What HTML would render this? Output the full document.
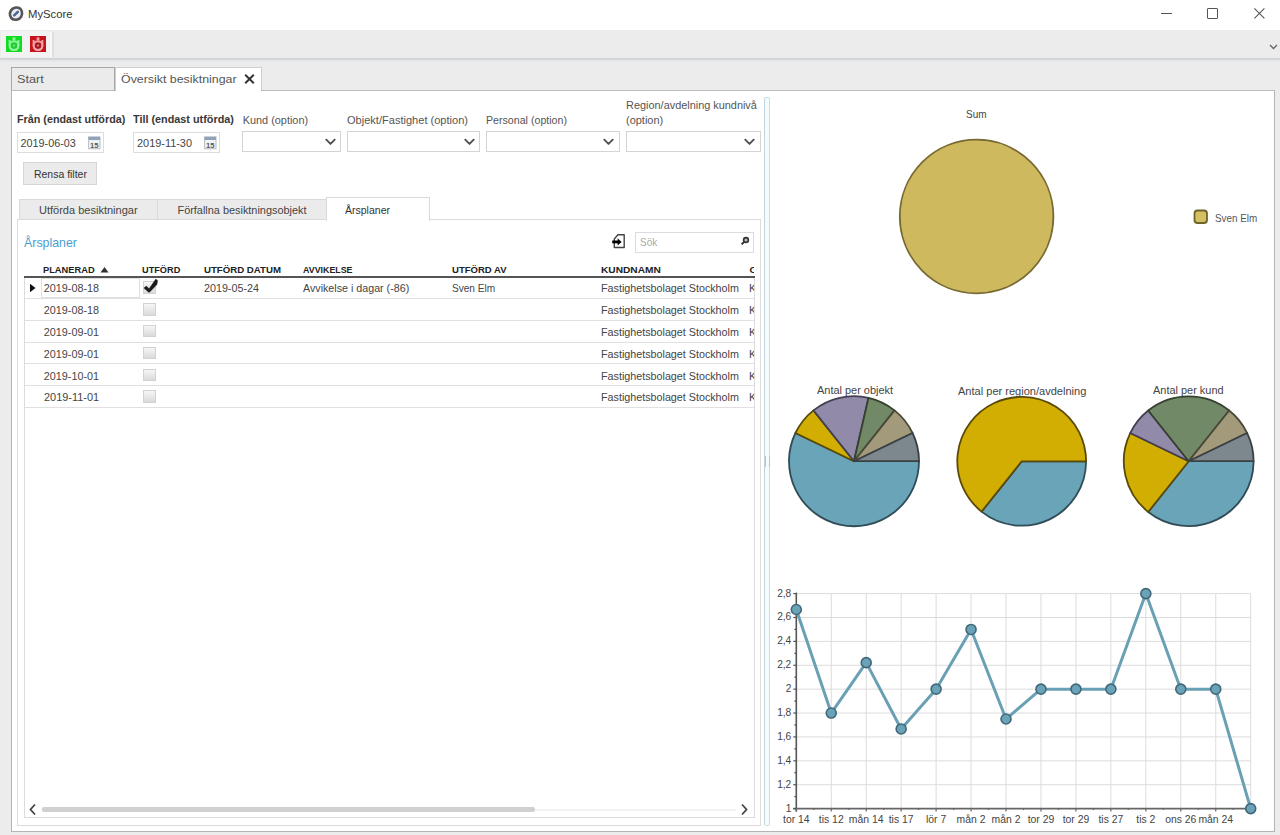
<!DOCTYPE html>
<html><head><meta charset="utf-8">
<style>
*{box-sizing:border-box;margin:0;padding:0}
html,body{width:1280px;height:835px;overflow:hidden;background:#ececec;font-family:"Liberation Sans",sans-serif;color:#444}
.a{position:absolute}
.t{position:absolute;white-space:nowrap;line-height:1}
</style></head><body>
<div class="a" style="left:0;top:0;width:1280px;height:29.5px;background:#fff"></div>
<svg class="a" style="left:0;top:0" width="32" height="30" viewBox="0 0 32 30">
  <circle cx="16" cy="13.7" r="5.6" fill="#e6eef9"/>
  <path d="M12.4 17.4L19.6 10" stroke="#f8fbff" stroke-width="2.4"/>
  <path d="M14.2 15.4L17.8 11.9" stroke="#4a6690" stroke-width="2.6" stroke-linecap="round"/>
  <path d="M18.85 7.67 A6.5 6.5 0 0 1 12.35 18.93" fill="none" stroke="#555" stroke-width="2.6"/>
  <path d="M13.15 19.63 A6.5 6.5 0 0 1 19.65 8.37" fill="none" stroke="#555" stroke-width="2.6"/>
</svg>
<div class="t" style="left:27.70px;top:8.48px;font-size:11.6px;font-weight:400;color:#333;transform:scaleX(0.9749);transform-origin:0 0;">MyScore</div>
<div class="a" style="left:1161px;top:13px;width:11px;height:1px;background:#555"></div>
<div class="a" style="left:1207px;top:8px;width:10.5px;height:10.5px;border:1px solid #555;border-radius:1px"></div>
<svg class="a" style="left:1253px;top:7px" width="13" height="13" viewBox="0 0 13 13"><path d="M1.4 1.4L11.4 11.4M11.4 1.4L1.4 11.4" stroke="#555" stroke-width="1.1"/></svg>
<div class="a" style="left:0;top:29.5px;width:1280px;height:28.5px;background:#ececec"></div>
<div class="a" style="left:1px;top:31px;width:49px;height:26px;background:#f2f2f2"></div>
<div class="a" style="left:0;top:58px;width:1280px;height:2px;background:#d2d4d6"></div>
<div class="a" style="left:0;top:60px;width:1280px;height:2px;background:#e6e9ec"></div>
<div class="a" style="left:50px;top:32px;width:1.5px;height:25px;background:#f8f8f8"></div>
<div class="a" style="left:51.5px;top:32px;width:2px;height:25px;background:#dedede"></div>
<div class="a" style="left:6px;top:36px;width:16px;height:16px;background:#12dc22"></div>
<svg class="a" style="left:6px;top:36px" width="16" height="16" viewBox="0 0 16 16"><circle cx="8" cy="9.6" r="3.4" fill="#26c83a"/><circle cx="8" cy="9.6" r="1.1" fill="#6ef07a"/><path d="M3.6 4 V9.6 A4.4 4.4 0 0 0 12.4 9.6 V4" fill="none" stroke="#8ef59a" stroke-width="1.9"/><circle cx="8" cy="9.6" r="4.4" fill="none" stroke="#8ef59a" stroke-width="1.9"/><rect x="6.6" y="1.4" width="2.8" height="3" fill="#8ef59a"/></svg>
<div class="a" style="left:30px;top:36px;width:16px;height:16px;background:#c8121c"></div>
<svg class="a" style="left:30px;top:36px" width="16" height="16" viewBox="0 0 16 16"><circle cx="8" cy="9.6" r="3.4" fill="#a81820"/><circle cx="8" cy="9.6" r="1.1" fill="#f07a80"/><path d="M3.6 4 V9.6 A4.4 4.4 0 0 0 12.4 9.6 V4" fill="none" stroke="#f2a4a4" stroke-width="1.9"/><circle cx="8" cy="9.6" r="4.4" fill="none" stroke="#f2a4a4" stroke-width="1.9"/><rect x="6.6" y="1.4" width="2.8" height="3" fill="#f2a4a4"/></svg>
<svg class="a" style="left:1269px;top:44px" width="9" height="6" viewBox="0 0 9 6"><path d="M1 1L4.5 4.5L8 1" fill="none" stroke="#666" stroke-width="1.4"/></svg>
<div class="a" style="left:11px;top:67px;width:105px;height:24px;background:#ebebeb;border:1px solid #a8a8a8;border-right:2px solid #a8a8a8"></div>
<div class="t" style="left:17.00px;top:73.08px;font-size:11.6px;font-weight:400;color:#555;transform:scaleX(1.0946);transform-origin:0 0;">Start</div>
<div class="a" style="left:115px;top:67px;width:147px;height:25px;background:#fff;border:1px solid #cfcfcf;border-bottom:none"></div>
<div class="t" style="left:121.40px;top:73.61px;font-size:11.8px;font-weight:400;color:#555;transform:scaleX(1.0494);transform-origin:0 0;">Översikt besiktningar</div>
<svg class="a" style="left:244px;top:74px" width="11" height="10" viewBox="0 0 11 10"><path d="M1.2 0.8L9.8 9.2M9.8 0.8L1.2 9.2" stroke="#333" stroke-width="2"/></svg>
<div class="a" style="left:11px;top:90px;width:1264px;height:742px;background:#fff;border:1px solid #b4b4b4;border-top-color:#bdbdc0"></div>
<div class="a" style="left:116px;top:89px;width:145px;height:3px;background:#fff"></div>
<div class="t" style="left:17.10px;top:114.37px;font-size:10.9px;font-weight:700;color:#383838;transform:scaleX(0.9889);transform-origin:0 0;">Från (endast utförda)</div>
<div class="t" style="left:133.30px;top:114.37px;font-size:10.9px;font-weight:700;color:#383838;transform:scaleX(0.9945);transform-origin:0 0;">Till (endast utförda)</div>
<div class="t" style="left:242.70px;top:114.67px;font-size:10.9px;font-weight:400;color:#555;">Kund (option)</div>
<div class="t" style="left:347.00px;top:114.67px;font-size:10.9px;font-weight:400;color:#555;transform:scaleX(1.0147);transform-origin:0 0;">Objekt/Fastighet (option)</div>
<div class="t" style="left:486.00px;top:114.67px;font-size:10.9px;font-weight:400;color:#555;transform:scaleX(0.9766);transform-origin:0 0;">Personal (option)</div>
<div class="t" style="left:626.10px;top:99.77px;font-size:10.9px;font-weight:400;color:#555;">Region/avdelning kundnivå</div>
<div class="t" style="left:626.10px;top:114.67px;font-size:10.9px;font-weight:400;color:#555;transform:scaleX(1.0071);transform-origin:0 0;">(option)</div>
<div class="a" style="left:17px;top:132px;width:87px;height:21px;border:1px solid #dcdcdc;background:#fff"></div>
<div class="t" style="left:20.60px;top:138.36px;font-size:10.8px;font-weight:400;color:#444;">2019-06-03</div>
<svg class="a" style="left:87.6px;top:136px" width="13" height="14" viewBox="0 0 13 14"><rect x="0.6" y="0.9" width="11.4" height="11.9" fill="#f0f3f6" stroke="#b4bcc4" stroke-width="1"/><rect x="0.6" y="0.9" width="11.4" height="3.1" fill="#8fa3b9"/><text x="6.3" y="11.6" font-size="7.6" font-weight="bold" text-anchor="middle" fill="#5a5a5a" font-family="Liberation Sans">15</text></svg>
<div class="a" style="left:133px;top:132px;width:87px;height:21px;border:1px solid #dcdcdc;background:#fff"></div>
<div class="t" style="left:137.00px;top:138.36px;font-size:10.8px;font-weight:400;color:#444;transform:scaleX(1.0103);transform-origin:0 0;">2019-11-30</div>
<svg class="a" style="left:203.6px;top:136px" width="13" height="14" viewBox="0 0 13 14"><rect x="0.6" y="0.9" width="11.4" height="11.9" fill="#f0f3f6" stroke="#b4bcc4" stroke-width="1"/><rect x="0.6" y="0.9" width="11.4" height="3.1" fill="#8fa3b9"/><text x="6.3" y="11.6" font-size="7.6" font-weight="bold" text-anchor="middle" fill="#5a5a5a" font-family="Liberation Sans">15</text></svg>
<div class="a" style="left:242px;top:131px;width:99px;height:21px;border:1px solid #d4d4d4;background:#fff"></div>
<svg class="a" style="left:325px;top:138px" width="11" height="8" viewBox="0 0 11 8"><path d="M1.3 1.7L5.5 5.9L9.7 1.7" fill="none" stroke="#505050" stroke-width="1.9" stroke-linecap="round" stroke-linejoin="round"/></svg>
<div class="a" style="left:347px;top:131px;width:133px;height:21px;border:1px solid #d4d4d4;background:#fff"></div>
<svg class="a" style="left:464px;top:138px" width="11" height="8" viewBox="0 0 11 8"><path d="M1.3 1.7L5.5 5.9L9.7 1.7" fill="none" stroke="#505050" stroke-width="1.9" stroke-linecap="round" stroke-linejoin="round"/></svg>
<div class="a" style="left:486px;top:131px;width:134px;height:21px;border:1px solid #d4d4d4;background:#fff"></div>
<svg class="a" style="left:603px;top:138px" width="11" height="8" viewBox="0 0 11 8"><path d="M1.3 1.7L5.5 5.9L9.7 1.7" fill="none" stroke="#505050" stroke-width="1.9" stroke-linecap="round" stroke-linejoin="round"/></svg>
<div class="a" style="left:626px;top:131px;width:135px;height:21px;border:1px solid #d4d4d4;background:#fff"></div>
<svg class="a" style="left:744px;top:138px" width="11" height="8" viewBox="0 0 11 8"><path d="M1.3 1.7L5.5 5.9L9.7 1.7" fill="none" stroke="#505050" stroke-width="1.9" stroke-linecap="round" stroke-linejoin="round"/></svg>
<div class="a" style="left:23px;top:162px;width:74px;height:23px;border:1px solid #d6d6d6;background:#ebebeb"></div>
<div class="t" style="left:34.00px;top:169.06px;font-size:10.8px;font-weight:400;color:#333;transform:scaleX(0.9687);transform-origin:0 0;">Rensa filter</div>
<div class="a" style="left:17px;top:218.5px;width:744px;height:607.5px;border:1px solid #dcdcdc;background:#fff"></div>
<div class="a" style="left:19px;top:199px;width:139px;height:20.5px;border:1px solid #dadada;background:#ebebeb"></div>
<div class="t" style="left:39.20px;top:204.57px;font-size:10.9px;font-weight:400;color:#444;transform:scaleX(1.0116);transform-origin:0 0;">Utförda besiktningar</div>
<div class="a" style="left:157px;top:199px;width:170px;height:20.5px;border:1px solid #dadada;background:#ebebeb"></div>
<div class="t" style="left:177.50px;top:204.57px;font-size:10.9px;font-weight:400;color:#444;">Förfallna besiktningsobjekt</div>
<div class="a" style="left:326px;top:197px;width:104px;height:24px;border:1px solid #dadada;border-bottom:none;background:#fff"></div>
<div class="t" style="left:345.00px;top:204.57px;font-size:10.9px;font-weight:400;color:#333;transform:scaleX(0.9651);transform-origin:0 0;">Årsplaner</div>
<div class="t" style="left:24.30px;top:236.57px;font-size:12.2px;font-weight:400;color:#4b9dd0;transform:scaleX(1.0159);transform-origin:0 0;">Årsplaner</div>
<svg class="a" style="left:611px;top:234px" width="15" height="15" viewBox="0 0 15 15"><path d="M6.9 0.8H13.2V13.5H3.3V5.0Z" fill="none" stroke="#444" stroke-width="1.4" stroke-linejoin="round"/><path d="M1.2 7.9H7.6" stroke="#000" stroke-width="2.8"/><path d="M6.6 4.2L10.6 7.9L6.6 11.6Z" fill="#000"/></svg>
<div class="a" style="left:635px;top:232px;width:119px;height:21px;border:1px solid #dcdcdc;background:#fff"></div>
<div class="t" style="left:639.80px;top:237.37px;font-size:10.9px;font-weight:400;color:#aaa;transform:scaleX(0.9158);transform-origin:0 0;">Sök</div>
<svg class="a" style="left:740px;top:236px" width="10" height="10" viewBox="0 0 10 10"><circle cx="6" cy="4" r="2.4" fill="#bbb" stroke="#333" stroke-width="1.6"/><path d="M4.4 5.6L1.6 8.4" stroke="#333" stroke-width="2"/></svg>
<div class="a" style="left:24px;top:276px;width:731px;height:542px;border:1px solid #dcdcdc;border-top:none;background:#fff"></div>
<div class="a" style="left:24px;top:276px;width:731px;height:2px;background:#555"></div>
<div class="t" style="left:43.10px;top:264.92px;font-size:9.9px;font-weight:700;color:#222;transform:scaleX(0.9403);transform-origin:0 0;">PLANERAD</div>
<svg class="a" style="left:100px;top:266px" width="9" height="7" viewBox="0 0 9 7"><path d="M0.5 6.5L4.5 1L8.5 6.5Z" fill="#333"/></svg>
<div class="t" style="left:142.20px;top:264.92px;font-size:9.9px;font-weight:700;color:#222;transform:scaleX(0.9310);transform-origin:0 0;">UTFÖRD</div>
<div class="t" style="left:203.75px;top:264.92px;font-size:9.9px;font-weight:700;color:#222;transform:scaleX(0.9770);transform-origin:0 0;">UTFÖRD DATUM</div>
<div class="t" style="left:303.00px;top:264.92px;font-size:9.9px;font-weight:700;color:#222;transform:scaleX(0.8959);transform-origin:0 0;">AVVIKELSE</div>
<div class="t" style="left:451.75px;top:264.92px;font-size:9.9px;font-weight:700;color:#222;transform:scaleX(0.9646);transform-origin:0 0;">UTFÖRD AV</div>
<div class="t" style="left:601.00px;top:264.92px;font-size:9.9px;font-weight:700;color:#222;transform:scaleX(1.0283);transform-origin:0 0;">KUNDNAMN</div>
<div class="a" style="left:747px;top:260px;width:7px;height:18px;overflow:hidden"><div class="t" style="left:2.50px;top:4.92px;font-size:9.9px;font-weight:700;color:#222">O</div></div>
<div class="a" style="left:25px;top:298.0px;width:729px;height:1px;background:#e0e0e0"></div>
<div class="a" style="left:41px;top:277.5px;width:98.5px;height:20px;border:1px solid #e0e0e0"></div>
<div class="t" style="left:43.80px;top:283.46px;font-size:10.8px;font-weight:400;color:#444;">2019-08-18</div>
<div class="a" style="left:143px;top:281.1px;width:12.5px;height:12.5px;border:1px solid #d2d2d2;background:linear-gradient(#f6f6f6,#dadada)"></div>
<div class="t" style="left:601.00px;top:283.46px;font-size:10.8px;font-weight:400;color:#444;transform:scaleX(0.9947);transform-origin:0 0;">Fastighetsbolaget Stockholm</div>
<div class="a" style="left:747px;top:279.5px;width:7px;height:18.0px;overflow:hidden"><div class="t" style="left:2.00px;top:3.96px;font-size:10.8px;font-weight:400;color:#444">K</div></div>
<svg class="a" style="left:29px;top:283px" width="8" height="10" viewBox="0 0 8 10"><path d="M1 0.8L6.5 5L1 9.2Z" fill="#111"/></svg>
<svg class="a" style="left:138px;top:275px" width="24" height="24" viewBox="0 0 24 24"><polygon points="5.89,13.08 8.34,11.07 11.07,13.80 17.82,4.02 19.55,5.46 18.97,9.49 11.50,17.25 10.35,16.96" fill="#1a1a1a" stroke="#1a1a1a" stroke-width="0.4" stroke-linejoin="round"/></svg>
<div class="t" style="left:204.20px;top:283.46px;font-size:10.8px;font-weight:400;color:#444;transform:scaleX(0.9939);transform-origin:0 0;">2019-05-24</div>
<div class="t" style="left:303.10px;top:283.46px;font-size:10.8px;font-weight:400;color:#444;transform:scaleX(0.9905);transform-origin:0 0;">Avvikelse i dagar (-86)</div>
<div class="t" style="left:451.90px;top:283.46px;font-size:10.8px;font-weight:400;color:#444;transform:scaleX(0.9328);transform-origin:0 0;">Sven Elm</div>
<div class="a" style="left:25px;top:319.8px;width:729px;height:1px;background:#e0e0e0"></div>
<div class="t" style="left:43.80px;top:305.26px;font-size:10.8px;font-weight:400;color:#444;">2019-08-18</div>
<div class="a" style="left:143px;top:303.1px;width:12.5px;height:12.5px;border:1px solid #d2d2d2;background:linear-gradient(#f6f6f6,#dadada)"></div>
<div class="t" style="left:601.00px;top:305.26px;font-size:10.8px;font-weight:400;color:#444;transform:scaleX(0.9947);transform-origin:0 0;">Fastighetsbolaget Stockholm</div>
<div class="a" style="left:747px;top:300.5px;width:7px;height:18.80000000000001px;overflow:hidden"><div class="t" style="left:2.00px;top:4.76px;font-size:10.8px;font-weight:400;color:#444">K</div></div>
<div class="a" style="left:25px;top:341.6px;width:729px;height:1px;background:#e0e0e0"></div>
<div class="t" style="left:43.80px;top:327.06px;font-size:10.8px;font-weight:400;color:#444;">2019-09-01</div>
<div class="a" style="left:143px;top:324.9px;width:12.5px;height:12.5px;border:1px solid #d2d2d2;background:linear-gradient(#f6f6f6,#dadada)"></div>
<div class="t" style="left:601.00px;top:327.06px;font-size:10.8px;font-weight:400;color:#444;transform:scaleX(0.9947);transform-origin:0 0;">Fastighetsbolaget Stockholm</div>
<div class="a" style="left:747px;top:322.3px;width:7px;height:18.80000000000001px;overflow:hidden"><div class="t" style="left:2.00px;top:4.76px;font-size:10.8px;font-weight:400;color:#444">K</div></div>
<div class="a" style="left:25px;top:363.4px;width:729px;height:1px;background:#e0e0e0"></div>
<div class="t" style="left:43.80px;top:348.86px;font-size:10.8px;font-weight:400;color:#444;">2019-09-01</div>
<div class="a" style="left:143px;top:346.7px;width:12.5px;height:12.5px;border:1px solid #d2d2d2;background:linear-gradient(#f6f6f6,#dadada)"></div>
<div class="t" style="left:601.00px;top:348.86px;font-size:10.8px;font-weight:400;color:#444;transform:scaleX(0.9947);transform-origin:0 0;">Fastighetsbolaget Stockholm</div>
<div class="a" style="left:747px;top:344.1px;width:7px;height:18.799999999999955px;overflow:hidden"><div class="t" style="left:2.00px;top:4.76px;font-size:10.8px;font-weight:400;color:#444">K</div></div>
<div class="a" style="left:25px;top:385.2px;width:729px;height:1px;background:#e0e0e0"></div>
<div class="t" style="left:43.80px;top:370.66px;font-size:10.8px;font-weight:400;color:#444;">2019-10-01</div>
<div class="a" style="left:143px;top:368.5px;width:12.5px;height:12.5px;border:1px solid #d2d2d2;background:linear-gradient(#f6f6f6,#dadada)"></div>
<div class="t" style="left:601.00px;top:370.66px;font-size:10.8px;font-weight:400;color:#444;transform:scaleX(0.9947);transform-origin:0 0;">Fastighetsbolaget Stockholm</div>
<div class="a" style="left:747px;top:365.9px;width:7px;height:18.80000000000001px;overflow:hidden"><div class="t" style="left:2.00px;top:4.76px;font-size:10.8px;font-weight:400;color:#444">K</div></div>
<div class="a" style="left:25px;top:407.0px;width:729px;height:1px;background:#e0e0e0"></div>
<div class="t" style="left:43.80px;top:392.46px;font-size:10.8px;font-weight:400;color:#444;transform:scaleX(1.0140);transform-origin:0 0;">2019-11-01</div>
<div class="a" style="left:143px;top:390.3px;width:12.5px;height:12.5px;border:1px solid #d2d2d2;background:linear-gradient(#f6f6f6,#dadada)"></div>
<div class="t" style="left:601.00px;top:392.46px;font-size:10.8px;font-weight:400;color:#444;transform:scaleX(0.9947);transform-origin:0 0;">Fastighetsbolaget Stockholm</div>
<div class="a" style="left:747px;top:387.7px;width:7px;height:18.80000000000001px;overflow:hidden"><div class="t" style="left:2.00px;top:4.76px;font-size:10.8px;font-weight:400;color:#444">K</div></div>
<svg class="a" style="left:28px;top:803px" width="10" height="13" viewBox="0 0 10 13"><path d="M7 1.5L2.5 6.5L7 11.5" fill="none" stroke="#444" stroke-width="1.8"/></svg>
<div class="a" style="left:42px;top:808.5px;width:694px;height:2px;background:#f3f3f3"></div>
<div class="a" style="left:42px;top:807px;width:493px;height:5px;background:#d0d0d0;border-radius:2px"></div>
<svg class="a" style="left:739px;top:803px" width="10" height="13" viewBox="0 0 10 13"><path d="M3 1.5L7.5 6.5L3 11.5" fill="none" stroke="#444" stroke-width="1.8"/></svg>
<div class="a" style="left:764.3px;top:96.5px;width:6.2px;height:729.5px;border:1px solid #c6dfe8;border-left-color:#c4d4dc;border-radius:2px;background:#f4fbfd"></div>
<div class="a" style="left:765.3px;top:456px;width:1px;height:10.5px;background:#b4c6ce"></div>
<div class="a" style="left:768.8px;top:456px;width:1px;height:10.5px;background:#b4c6ce"></div>
<svg class="a" style="left:0;top:0" width="1280" height="835" viewBox="0 0 1280 835">
<circle cx="976.6" cy="216.5" r="76.8" fill="#cfb95f" stroke="#786a32" stroke-width="1.8"/>
<rect x="1194.5" y="210.5" width="12.5" height="12.5" rx="3" fill="#d3c062" stroke="#6e6428" stroke-width="1.8"/>
<path d="M854.0,461.2 L795.44,433.00 A65.0,65.0 0 1 0 919.00,461.20 Z" fill="#69a4b9" stroke="#304c56" stroke-width="1.8" stroke-linejoin="round"/>
<path d="M854.0,461.2 L813.47,410.38 A65.0,65.0 0 0 0 795.44,433.00 Z" fill="#d2ad02" stroke="#5a4a08" stroke-width="1.8" stroke-linejoin="round"/>
<path d="M854.0,461.2 L868.46,397.83 A65.0,65.0 0 0 0 813.47,410.38 Z" fill="#918aa8" stroke="#444050" stroke-width="1.8" stroke-linejoin="round"/>
<path d="M854.0,461.2 L894.53,410.38 A65.0,65.0 0 0 0 868.46,397.83 Z" fill="#718966" stroke="#354030" stroke-width="1.8" stroke-linejoin="round"/>
<path d="M854.0,461.2 L912.56,433.00 A65.0,65.0 0 0 0 894.53,410.38 Z" fill="#a29a7b" stroke="#4c4838" stroke-width="1.8" stroke-linejoin="round"/>
<path d="M854.0,461.2 L919.00,461.20 A65.0,65.0 0 0 0 912.56,433.00 Z" fill="#7c888e" stroke="#3a4044" stroke-width="1.8" stroke-linejoin="round"/>
<path d="M1021.7,461.3 L981.55,511.65 A64.4,64.4 0 0 0 1086.10,461.30 Z" fill="#69a4b9" stroke="#304c56" stroke-width="1.8" stroke-linejoin="round"/>
<path d="M1021.7,461.3 L1086.10,461.30 A64.4,64.4 0 1 0 981.55,511.65 Z" fill="#d2ad02" stroke="#5a4a08" stroke-width="1.8" stroke-linejoin="round"/>
<path d="M1188.7,461.2 L1148.24,511.94 A64.9,64.9 0 0 0 1253.60,461.20 Z" fill="#69a4b9" stroke="#304c56" stroke-width="1.8" stroke-linejoin="round"/>
<path d="M1188.7,461.2 L1130.23,433.04 A64.9,64.9 0 0 0 1148.24,511.94 Z" fill="#d2ad02" stroke="#5a4a08" stroke-width="1.8" stroke-linejoin="round"/>
<path d="M1188.7,461.2 L1148.24,410.46 A64.9,64.9 0 0 0 1130.23,433.04 Z" fill="#918aa8" stroke="#444050" stroke-width="1.8" stroke-linejoin="round"/>
<path d="M1188.7,461.2 L1229.16,410.46 A64.9,64.9 0 0 0 1148.24,410.46 Z" fill="#718966" stroke="#354030" stroke-width="1.8" stroke-linejoin="round"/>
<path d="M1188.7,461.2 L1247.17,433.04 A64.9,64.9 0 0 0 1229.16,410.46 Z" fill="#a29a7b" stroke="#4c4838" stroke-width="1.8" stroke-linejoin="round"/>
<path d="M1188.7,461.2 L1253.60,461.20 A64.9,64.9 0 0 0 1247.17,433.04 Z" fill="#7c888e" stroke="#3a4044" stroke-width="1.8" stroke-linejoin="round"/>
<line x1="796.3" y1="784.71" x2="1250.7" y2="784.71" stroke="#dcdcdc" stroke-width="1"/>
<line x1="796.3" y1="760.82" x2="1250.7" y2="760.82" stroke="#dcdcdc" stroke-width="1"/>
<line x1="796.3" y1="736.93" x2="1250.7" y2="736.93" stroke="#dcdcdc" stroke-width="1"/>
<line x1="796.3" y1="713.04" x2="1250.7" y2="713.04" stroke="#dcdcdc" stroke-width="1"/>
<line x1="796.3" y1="689.16" x2="1250.7" y2="689.16" stroke="#dcdcdc" stroke-width="1"/>
<line x1="796.3" y1="665.27" x2="1250.7" y2="665.27" stroke="#dcdcdc" stroke-width="1"/>
<line x1="796.3" y1="641.38" x2="1250.7" y2="641.38" stroke="#dcdcdc" stroke-width="1"/>
<line x1="796.3" y1="617.49" x2="1250.7" y2="617.49" stroke="#dcdcdc" stroke-width="1"/>
<line x1="796.3" y1="593.60" x2="1250.7" y2="593.60" stroke="#dcdcdc" stroke-width="1"/>
<line x1="831.25" y1="593.6" x2="831.25" y2="808.6" stroke="#dcdcdc" stroke-width="1"/>
<line x1="866.21" y1="593.6" x2="866.21" y2="808.6" stroke="#dcdcdc" stroke-width="1"/>
<line x1="901.16" y1="593.6" x2="901.16" y2="808.6" stroke="#dcdcdc" stroke-width="1"/>
<line x1="936.12" y1="593.6" x2="936.12" y2="808.6" stroke="#dcdcdc" stroke-width="1"/>
<line x1="971.07" y1="593.6" x2="971.07" y2="808.6" stroke="#dcdcdc" stroke-width="1"/>
<line x1="1006.02" y1="593.6" x2="1006.02" y2="808.6" stroke="#dcdcdc" stroke-width="1"/>
<line x1="1040.98" y1="593.6" x2="1040.98" y2="808.6" stroke="#dcdcdc" stroke-width="1"/>
<line x1="1075.93" y1="593.6" x2="1075.93" y2="808.6" stroke="#dcdcdc" stroke-width="1"/>
<line x1="1110.88" y1="593.6" x2="1110.88" y2="808.6" stroke="#dcdcdc" stroke-width="1"/>
<line x1="1145.84" y1="593.6" x2="1145.84" y2="808.6" stroke="#dcdcdc" stroke-width="1"/>
<line x1="1180.79" y1="593.6" x2="1180.79" y2="808.6" stroke="#dcdcdc" stroke-width="1"/>
<line x1="1215.75" y1="593.6" x2="1215.75" y2="808.6" stroke="#dcdcdc" stroke-width="1"/>
<line x1="1250.70" y1="593.6" x2="1250.70" y2="808.6" stroke="#dcdcdc" stroke-width="1"/>
<line x1="796.3" y1="592.6" x2="796.3" y2="811.6" stroke="#555" stroke-width="1.6"/>
<line x1="793.3" y1="808.6" x2="1250.7" y2="808.6" stroke="#666" stroke-width="1.6"/>
<line x1="793.3" y1="808.60" x2="796.3" y2="808.60" stroke="#555" stroke-width="1.2"/>
<line x1="794.3" y1="796.66" x2="796.3" y2="796.66" stroke="#555" stroke-width="1.2"/>
<line x1="793.3" y1="784.71" x2="796.3" y2="784.71" stroke="#555" stroke-width="1.2"/>
<line x1="794.3" y1="772.77" x2="796.3" y2="772.77" stroke="#555" stroke-width="1.2"/>
<line x1="793.3" y1="760.82" x2="796.3" y2="760.82" stroke="#555" stroke-width="1.2"/>
<line x1="794.3" y1="748.88" x2="796.3" y2="748.88" stroke="#555" stroke-width="1.2"/>
<line x1="793.3" y1="736.93" x2="796.3" y2="736.93" stroke="#555" stroke-width="1.2"/>
<line x1="794.3" y1="724.99" x2="796.3" y2="724.99" stroke="#555" stroke-width="1.2"/>
<line x1="793.3" y1="713.04" x2="796.3" y2="713.04" stroke="#555" stroke-width="1.2"/>
<line x1="794.3" y1="701.10" x2="796.3" y2="701.10" stroke="#555" stroke-width="1.2"/>
<line x1="793.3" y1="689.16" x2="796.3" y2="689.16" stroke="#555" stroke-width="1.2"/>
<line x1="794.3" y1="677.21" x2="796.3" y2="677.21" stroke="#555" stroke-width="1.2"/>
<line x1="793.3" y1="665.27" x2="796.3" y2="665.27" stroke="#555" stroke-width="1.2"/>
<line x1="794.3" y1="653.32" x2="796.3" y2="653.32" stroke="#555" stroke-width="1.2"/>
<line x1="793.3" y1="641.38" x2="796.3" y2="641.38" stroke="#555" stroke-width="1.2"/>
<line x1="794.3" y1="629.43" x2="796.3" y2="629.43" stroke="#555" stroke-width="1.2"/>
<line x1="793.3" y1="617.49" x2="796.3" y2="617.49" stroke="#555" stroke-width="1.2"/>
<line x1="794.3" y1="605.54" x2="796.3" y2="605.54" stroke="#555" stroke-width="1.2"/>
<line x1="793.3" y1="593.60" x2="796.3" y2="593.60" stroke="#555" stroke-width="1.2"/>
<line x1="796.30" y1="808.6" x2="796.30" y2="811.6" stroke="#666" stroke-width="1.2"/>
<line x1="813.78" y1="808.6" x2="813.78" y2="810.1" stroke="#666" stroke-width="1.2"/>
<line x1="831.25" y1="808.6" x2="831.25" y2="811.6" stroke="#666" stroke-width="1.2"/>
<line x1="848.73" y1="808.6" x2="848.73" y2="810.1" stroke="#666" stroke-width="1.2"/>
<line x1="866.21" y1="808.6" x2="866.21" y2="811.6" stroke="#666" stroke-width="1.2"/>
<line x1="883.68" y1="808.6" x2="883.68" y2="810.1" stroke="#666" stroke-width="1.2"/>
<line x1="901.16" y1="808.6" x2="901.16" y2="811.6" stroke="#666" stroke-width="1.2"/>
<line x1="918.64" y1="808.6" x2="918.64" y2="810.1" stroke="#666" stroke-width="1.2"/>
<line x1="936.12" y1="808.6" x2="936.12" y2="811.6" stroke="#666" stroke-width="1.2"/>
<line x1="953.59" y1="808.6" x2="953.59" y2="810.1" stroke="#666" stroke-width="1.2"/>
<line x1="971.07" y1="808.6" x2="971.07" y2="811.6" stroke="#666" stroke-width="1.2"/>
<line x1="988.55" y1="808.6" x2="988.55" y2="810.1" stroke="#666" stroke-width="1.2"/>
<line x1="1006.02" y1="808.6" x2="1006.02" y2="811.6" stroke="#666" stroke-width="1.2"/>
<line x1="1023.50" y1="808.6" x2="1023.50" y2="810.1" stroke="#666" stroke-width="1.2"/>
<line x1="1040.98" y1="808.6" x2="1040.98" y2="811.6" stroke="#666" stroke-width="1.2"/>
<line x1="1058.45" y1="808.6" x2="1058.45" y2="810.1" stroke="#666" stroke-width="1.2"/>
<line x1="1075.93" y1="808.6" x2="1075.93" y2="811.6" stroke="#666" stroke-width="1.2"/>
<line x1="1093.41" y1="808.6" x2="1093.41" y2="810.1" stroke="#666" stroke-width="1.2"/>
<line x1="1110.88" y1="808.6" x2="1110.88" y2="811.6" stroke="#666" stroke-width="1.2"/>
<line x1="1128.36" y1="808.6" x2="1128.36" y2="810.1" stroke="#666" stroke-width="1.2"/>
<line x1="1145.84" y1="808.6" x2="1145.84" y2="811.6" stroke="#666" stroke-width="1.2"/>
<line x1="1163.32" y1="808.6" x2="1163.32" y2="810.1" stroke="#666" stroke-width="1.2"/>
<line x1="1180.79" y1="808.6" x2="1180.79" y2="811.6" stroke="#666" stroke-width="1.2"/>
<line x1="1198.27" y1="808.6" x2="1198.27" y2="810.1" stroke="#666" stroke-width="1.2"/>
<line x1="1215.75" y1="808.6" x2="1215.75" y2="811.6" stroke="#666" stroke-width="1.2"/>
<line x1="1233.22" y1="808.6" x2="1233.22" y2="810.1" stroke="#666" stroke-width="1.2"/>
<line x1="1250.70" y1="808.6" x2="1250.70" y2="811.6" stroke="#666" stroke-width="1.2"/>
<polyline points="796.30,609.49 831.25,713.04 866.21,662.64 901.16,728.93 936.12,689.16 971.07,629.43 1006.02,719.02 1040.98,689.16 1075.93,689.16 1110.88,689.16 1145.84,593.60 1180.79,689.16 1215.75,689.16 1250.70,808.60" fill="none" stroke="#6aa0b4" stroke-width="3" stroke-linejoin="round"/>
<circle cx="796.30" cy="609.49" r="5" fill="#6aa3b7" stroke="#41687a" stroke-width="1.6"/>
<circle cx="831.25" cy="713.04" r="5" fill="#6aa3b7" stroke="#41687a" stroke-width="1.6"/>
<circle cx="866.21" cy="662.64" r="5" fill="#6aa3b7" stroke="#41687a" stroke-width="1.6"/>
<circle cx="901.16" cy="728.93" r="5" fill="#6aa3b7" stroke="#41687a" stroke-width="1.6"/>
<circle cx="936.12" cy="689.16" r="5" fill="#6aa3b7" stroke="#41687a" stroke-width="1.6"/>
<circle cx="971.07" cy="629.43" r="5" fill="#6aa3b7" stroke="#41687a" stroke-width="1.6"/>
<circle cx="1006.02" cy="719.02" r="5" fill="#6aa3b7" stroke="#41687a" stroke-width="1.6"/>
<circle cx="1040.98" cy="689.16" r="5" fill="#6aa3b7" stroke="#41687a" stroke-width="1.6"/>
<circle cx="1075.93" cy="689.16" r="5" fill="#6aa3b7" stroke="#41687a" stroke-width="1.6"/>
<circle cx="1110.88" cy="689.16" r="5" fill="#6aa3b7" stroke="#41687a" stroke-width="1.6"/>
<circle cx="1145.84" cy="593.60" r="5" fill="#6aa3b7" stroke="#41687a" stroke-width="1.6"/>
<circle cx="1180.79" cy="689.16" r="5" fill="#6aa3b7" stroke="#41687a" stroke-width="1.6"/>
<circle cx="1215.75" cy="689.16" r="5" fill="#6aa3b7" stroke="#41687a" stroke-width="1.6"/>
<circle cx="1250.70" cy="808.60" r="5" fill="#6aa3b7" stroke="#41687a" stroke-width="1.6"/>
</svg>
<div class="t" style="left:777.13px;top:588.57px;font-size:10.2px;font-weight:400;color:#444;">2,8</div>
<div class="t" style="left:777.13px;top:612.45px;font-size:10.2px;font-weight:400;color:#444;">2,6</div>
<div class="t" style="left:777.13px;top:636.34px;font-size:10.2px;font-weight:400;color:#444;">2,4</div>
<div class="t" style="left:777.13px;top:660.23px;font-size:10.2px;font-weight:400;color:#444;">2,2</div>
<div class="t" style="left:785.63px;top:684.12px;font-size:10.2px;font-weight:400;color:#444;">2</div>
<div class="t" style="left:777.13px;top:708.01px;font-size:10.2px;font-weight:400;color:#444;">1,8</div>
<div class="t" style="left:777.13px;top:731.90px;font-size:10.2px;font-weight:400;color:#444;">1,6</div>
<div class="t" style="left:777.13px;top:755.79px;font-size:10.2px;font-weight:400;color:#444;">1,4</div>
<div class="t" style="left:777.13px;top:779.68px;font-size:10.2px;font-weight:400;color:#444;">1,2</div>
<div class="t" style="left:785.63px;top:803.57px;font-size:10.2px;font-weight:400;color:#444;">1</div>
<div class="t" style="left:783.01px;top:814.50px;font-size:10.4px;font-weight:400;color:#444;">tor 14</div>
<div class="t" style="left:818.83px;top:814.50px;font-size:10.4px;font-weight:400;color:#444;">tis 12</div>
<div class="t" style="left:848.87px;top:814.50px;font-size:10.4px;font-weight:400;color:#444;">mån 14</div>
<div class="t" style="left:888.74px;top:814.50px;font-size:10.4px;font-weight:400;color:#444;">tis 17</div>
<div class="t" style="left:926.01px;top:814.50px;font-size:10.4px;font-weight:400;color:#444;">lör 7</div>
<div class="t" style="left:956.62px;top:814.50px;font-size:10.4px;font-weight:400;color:#444;">mån 2</div>
<div class="t" style="left:991.58px;top:814.50px;font-size:10.4px;font-weight:400;color:#444;">mån 2</div>
<div class="t" style="left:1027.69px;top:814.50px;font-size:10.4px;font-weight:400;color:#444;">tor 29</div>
<div class="t" style="left:1062.64px;top:814.50px;font-size:10.4px;font-weight:400;color:#444;">tor 29</div>
<div class="t" style="left:1098.46px;top:814.50px;font-size:10.4px;font-weight:400;color:#444;">tis 27</div>
<div class="t" style="left:1136.31px;top:814.50px;font-size:10.4px;font-weight:400;color:#444;">tis 2</div>
<div class="t" style="left:1165.19px;top:814.50px;font-size:10.4px;font-weight:400;color:#444;">ons 26</div>
<div class="t" style="left:1198.41px;top:814.50px;font-size:10.4px;font-weight:400;color:#444;">mån 24</div>
<div class="t" style="left:966.20px;top:108.57px;font-size:10.9px;font-weight:400;color:#444;transform:scaleX(0.9149);transform-origin:0 0;">Sum</div>
<div class="t" style="left:1214.70px;top:212.97px;font-size:10.9px;font-weight:400;color:#555;transform:scaleX(0.9054);transform-origin:0 0;">Sven Elm</div>
<div class="t" style="left:816.60px;top:384.67px;font-size:10.9px;font-weight:400;color:#444;transform:scaleX(1.0055);transform-origin:0 0;">Antal per objekt</div>
<div class="t" style="left:957.60px;top:385.67px;font-size:10.9px;font-weight:400;color:#444;transform:scaleX(1.0139);transform-origin:0 0;">Antal per region/avdelning</div>
<div class="t" style="left:1152.90px;top:384.67px;font-size:10.9px;font-weight:400;color:#444;transform:scaleX(1.0052);transform-origin:0 0;">Antal per kund</div>
</body></html>
